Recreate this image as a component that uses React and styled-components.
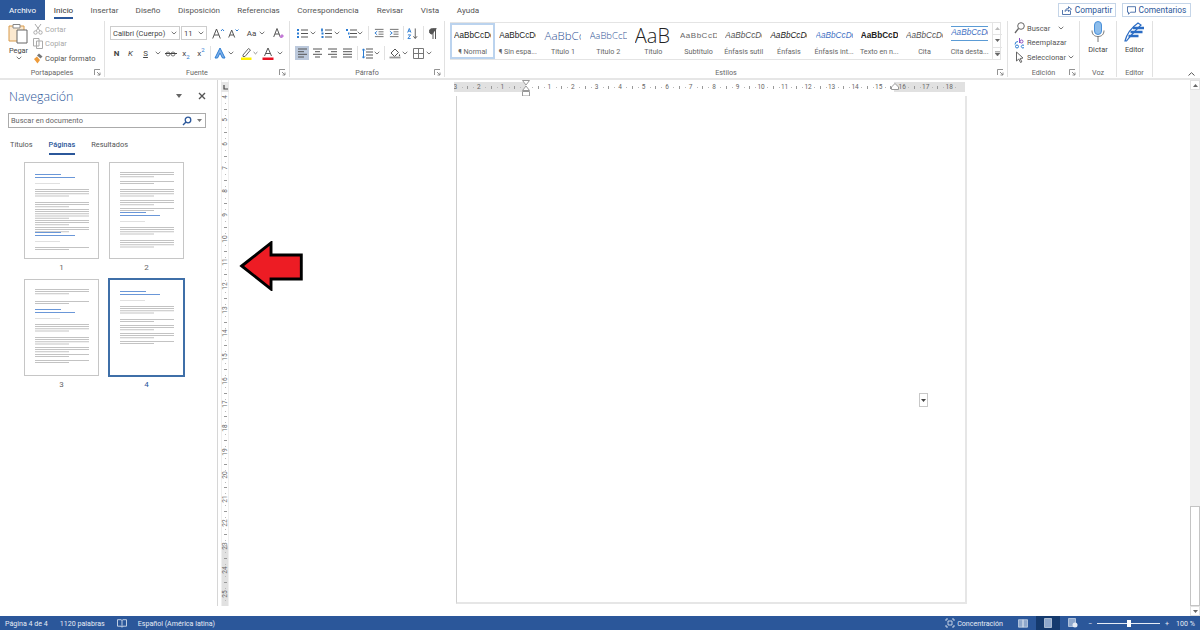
import styled, { createGlobalStyle } from 'styled-components'

const GlobalStyle = createGlobalStyle`
  html, body {
    margin: 0;
    padding: 0;
    background: #FFFFFF;
    overflow: hidden;
  }
  * {
    box-sizing: border-box;
  }
`

const Window = styled.div`
  width: 1200px;
  height: 630px;
  display: flex;
  flex-direction: column;
  font-family: 'Roboto', 'Open Sans', sans-serif;
  font-size: 8px;
  color: #555555;
  background: #FFFFFF;
  overflow: hidden;
`

const TabBar = styled.div`
  height: 20px;
  flex: none;
  display: flex;
  align-items: center;
  font-size: 8.1px;
`

const FileTab = styled.div`
  width: 45px;
  height: 20px;
  margin-right: -9px;
  background: #2B579A;
  color: #FFFFFF;
  display: flex;
  align-items: center;
  justify-content: center;
`

const Tab = styled.div`
  position: relative;
  width: ${props => props.$w}px;
  margin-left: 18px;
  height: 20px;
  line-height: 20px;
  white-space: nowrap;
  display: flex;
  justify-content: center;
  color: ${props => props.$active ? '#333333' : '#555555'};

  &::after {
    content: '';
    display: ${props => props.$active ? 'block' : 'none'};
    position: absolute;
    left: 0;
    right: 0;
    bottom: 1px;
    height: 2px;
    background: #2B579A;
  }
`

const ShareButton = styled.div`
  width: ${props => props.$w}px;
  height: 14px;
  margin-left: ${props => props.$ml}px;
  flex: none;
  border: 1px solid #C5D5E8;
  color: #2B579A;
  font-size: 8.4px;
  display: flex;
  align-items: center;
  justify-content: center;
  gap: 3px;
`

const Ribbon = styled.div`
  position: relative;
  height: 58px;
  flex: none;
  display: flex;
`

const Group = styled.div`
  position: relative;
  width: ${props => props.$w}px;
  height: 56px;
  margin-top: 1px;
  border-right: 1px solid #E1E1E1;
  flex: none;
`

const GroupBody = styled.div`
  height: 48px;
  margin-top: -1px;
  padding-left: ${props => props.$pl || 0}px;
  padding-top: ${props => props.$pt || 0}px;
  display: flex;
  flex-direction: ${props => props.$column ? 'column' : 'row'};
  gap: ${props => props.$gap || 0}px;
  align-items: ${props => props.$center ? 'center' : 'stretch'};
`

const GroupLabel = styled.div`
  height: 10px;
  line-height: 10px;
  text-align: center;
  font-size: 7.2px;
  color: #666666;
`

const Launcher = styled.svg`
  position: absolute;
  right: 3px;
  bottom: 1px;
`

const Collapse = styled.svg`
  position: absolute;
  right: 5px;
  bottom: 2px;
`

const PasteColumn = styled.div`
  width: 33px;
  flex: none;
  padding: 3px 0 0 4px;
  display: flex;
  flex-direction: column;
  align-items: center;
`

const BigLabel = styled.div`
  margin-top: ${props => props.$mt ?? 1}px;
  line-height: 11px;
  font-size: 7.4px;
  color: #444444;
`

const ActionColumn = styled.div`
  padding-top: ${props => props.$pt || 0}px;
  padding-left: ${props => props.$pl || 0}px;
  display: flex;
  flex-direction: column;
`

const ActionRow = styled.div`
  height: 14.5px;
  display: flex;
  align-items: center;
  gap: 2px;
  font-size: 7.5px;
  white-space: nowrap;
  color: ${props => props.$off ? '#A8A8A8' : '#555555'};
`

const RowChevron = styled.span`
  display: flex;
  margin-left: ${props => props.$ml || 0}px;
`

const ToolRow = styled.div`
  height: 16px;
  display: flex;
  align-items: center;
`

const Slot = styled.div`
  width: ${props => props.$w}px;
  margin-left: ${props => props.$ml || 0}px;
  height: 14px;
  flex: none;
  display: flex;
  align-items: center;
  justify-content: center;
  background: ${props => props.$active ? '#BCC9DC' : 'transparent'};
  color: #444444;
  font-weight: ${props => props.$bold ? 700 : 400};
  font-style: ${props => props.$italic ? 'italic' : 'normal'};
`

const ScriptDigit = styled.span`
  font-size: 6px;
  color: #2B7CD3;
  line-height: 0;
  vertical-align: ${props => props.$up ? 'super' : 'sub'};
`

const Divider = styled.div`
  width: 1px;
  height: 14px;
  margin-left: ${props => props.$ml || 0}px;
  flex: none;
  background: #E1E1E1;
`

const Combo = styled.div`
  width: ${props => props.$w}px;
  height: 14px;
  margin-right: 1px;
  flex: none;
  border: 1px solid #CDCDCD;
  padding: 0 2px;
  display: flex;
  align-items: center;
  justify-content: space-between;
  font-size: 7.5px;
  color: #444444;
  white-space: nowrap;
`

const Gallery = styled.div`
  width: 551px;
  height: 38px;
  margin: 2px 0 0 5px;
  border: 1px solid #E4E4E4;
  border-left: 0;
  display: flex;
`

const StyleItem = styled.div`
  width: 45.2px;
  height: 36px;
  flex: none;
  display: flex;
  flex-direction: column;
  align-items: center;
  border: 2px solid ${props => props.$selected ? '#BBD3EE' : 'transparent'};
  overflow: hidden;
`

const StylePreview = styled.div`
  width: 37px;
  flex: none;
  overflow: hidden;
  display: flex;
  align-items: center;
  white-space: nowrap;
  line-height: 1;
  font-family: ${props => props.$light ? "'Open Sans', sans-serif" : "'Liberation Sans', sans-serif"};
  font-size: ${props => props.$size || 8.2}px;
  font-style: ${props => props.$italic ? 'italic' : 'normal'};
  font-weight: ${props => props.$light ? 300 : props.$bold ? 700 : 400};
  letter-spacing: ${props => props.$spacing || 0}px;
  color: ${props => props.$color || '#222222'};
  border-top: ${props => props.$rule ? '1px solid #5B9BD5' : '0'};
  border-bottom: ${props => props.$rule ? '1px solid #5B9BD5' : '0'};
  margin-top: ${props => props.$rule ? '1px' : '0'};
  height: ${props => props.$rule ? '15px' : '22px'};
  margin-bottom: ${props => props.$rule ? '6px' : '0'};
`

const StyleCaption = styled.div`
  margin-top: -1px;
  line-height: 11px;
  font-size: 7.2px;
  white-space: nowrap;
  color: #666666;
`

const GalleryScroll = styled.div`
  width: 10px;
  flex: none;
  display: flex;
  flex-direction: column;
  border-left: 1px solid #E4E4E4;
`

const GalleryStep = styled.div`
  flex: 1;
  display: flex;
  align-items: center;
  justify-content: center;
  border-bottom: ${props => props.$last ? '0' : '1px solid #E4E4E4'};
`

const Workspace = styled.div`
  flex: 1;
  min-height: 0;
  display: flex;
  background: #FFFFFF;
  border-top: 2px solid #E6E6E6;
`

const NavPanel = styled.div`
  width: 218px;
  height: 526px;
  flex: none;
  padding: 6px 12px 0 8px;
  border-right: 1px solid #D6D6D6;
  font-size: 7.4px;
`

const NavHeader = styled.div`
  height: 20px;
  display: flex;
  align-items: center;
  padding-left: 1px;
`

const NavTitle = styled.div`
  flex: 1;
  font-family: 'Open Sans', sans-serif;
  font-weight: 300;
  font-size: 12.4px;
  color: #2B579A;
`

const NavClose = styled.svg`
  margin-left: 16px;
  margin-right: -1px;
`

const SearchBox = styled.div`
  width: 198px;
  height: 15px;
  margin-top: 7px;
  border: 1px solid #ABABAB;
  display: flex;
  align-items: center;
  gap: 5px;
  padding: 0 3px 0 2px;
  color: #666666;
`

const SearchText = styled.div`
  flex: 1;
`

const NavTabs = styled.div`
  display: flex;
  gap: 16px;
  margin-top: 10px;
  padding-left: 2px;
  height: 17px;
`

const NavTab = styled.div`
  height: 17px;
  line-height: 14px;
  color: ${props => props.$active ? '#2B579A' : '#555555'};
  font-weight: ${props => props.$active ? 500 : 400};
  white-space: nowrap;
  border-bottom: 2px solid ${props => props.$active ? '#2B579A' : 'transparent'};
`

const ThumbGrid = styled.div`
  display: grid;
  grid-template-columns: 75px 75px;
  column-gap: 10px;
  row-gap: 6px;
  margin: 7px 0 0 16px;
`

const ThumbCell = styled.div`
  display: flex;
  flex-direction: column;
  align-items: center;
`

const Thumb = styled.svg`
  display: block;
  width: 75px;
  height: 97px;
  background: #FFFFFF;
  outline: ${props => props.$selected ? '2px solid #3F6FA8' : '1px solid #C6C6C6'};
  outline-offset: -1px;
`

const ThumbLabel = styled.div`
  margin-top: 3px;
  line-height: 11px;
  font-size: 8px;
  color: ${props => props.$selected ? '#2B579A' : '#666666'};
`

const SideRuler = styled.div`
  position: relative;
  width: 8px;
  height: 526px;
  margin-left: 3px;
  flex: none;
  overflow: hidden;
  background: linear-gradient(#FFFFFF 0 465px, #E1E1E1 465px);
  box-shadow: inset 1px 0 0 #EFEFEF, inset -1px 0 0 #EFEFEF;
`

const SideTrack = styled.div`
  margin-top: 5px;
  display: flex;
  flex-direction: column;
`

const SideCell = styled.div`
  height: 23.67px;
  flex: none;
  display: flex;
  align-items: center;
  justify-content: center;
  font-size: 6.5px;
  color: #666666;
  background:
    linear-gradient(#999999, #999999) 50% 0 / 3px 1px no-repeat,
    linear-gradient(#BBBBBB, #BBBBBB) 50% 6px / 1px 1px no-repeat,
    linear-gradient(#BBBBBB, #BBBBBB) 50% 18px / 1px 1px no-repeat;
`

const SideNumber = styled.span`
  display: block;
  transform: rotate(-90deg);
`

const RulerCorner = styled.div`
  position: absolute;
  top: 2px;
  left: 0;
  width: 8px;
  height: 10px;
  background: #E6E6E6;
  display: flex;
  align-items: center;
  justify-content: center;
`

const DocArea = styled.div`
  position: relative;
  flex: 1;
  min-width: 0;
  padding: 2px 0 0 225px;
`

const TopRuler = styled.div`
  width: 511px;
  height: 10px;
  overflow: hidden;
  background: linear-gradient(90deg, #E1E1E1 0 72px, #FFFFFF 72px 440px, #E1E1E1 440px);
`

const TopTrack = styled.div`
  display: flex;
  margin-left: -10.4px;
`

const TopCell = styled.div`
  width: 23.53px;
  height: 10px;
  flex: none;
  font-size: 6.5px;
  line-height: 10px;
  text-align: center;
  color: #666666;
  background:
    linear-gradient(#999999, #999999) 0 50% / 1px 3px no-repeat,
    linear-gradient(#BBBBBB, #BBBBBB) 6px 50% / 1px 1px no-repeat,
    linear-gradient(#BBBBBB, #BBBBBB) 18px 50% / 1px 1px no-repeat;
`

const IndentMarker = styled.svg`
  position: absolute;
  top: 0;
  left: 293px;
`

const MarginMarker = styled.svg`
  position: absolute;
  top: 3px;
  left: 662px;
`

const Page = styled.div`
  position: relative;
  width: 511px;
  height: 508px;
  margin: 4px 0 0 2px;
  border-left: 1px solid #CFCFCF;
  border-right: 2px solid #E6E6E6;
  border-bottom: 2px solid #E6E6E6;
  background: #FFFFFF;
`

const PageHandle = styled.div`
  position: absolute;
  top: 297px;
  right: 37px;
  width: 9px;
  height: 14px;
  border: 1px solid #C8C8C8;
  background: #FFFFFF;
  display: flex;
  align-items: center;
  justify-content: center;
`

const PointerArrow = styled.svg`
  position: absolute;
  top: 161px;
  left: 10px;
`

const ScrollBar = styled.div`
  width: 10px;
  flex: none;
  display: flex;
  flex-direction: column;
  background: #F1F1F1;
`

const ScrollStep = styled.div`
  height: 10px;
  flex: none;
  display: flex;
  align-items: center;
  justify-content: center;
  background: #FFFFFF;
  border: 1px solid #E1E1E1;
`

const ScrollSpace = styled.div`
  flex: 1;
`

const ScrollThumb = styled.div`
  height: 100px;
  flex: none;
  background: #FFFFFF;
  border: 1px solid #C4C4C4;
`

const StatusBar = styled.div`
  height: 14px;
  flex: none;
  display: flex;
  align-items: center;
  background: #2B579A;
  color: #E6ECF5;
  font-size: 7.1px;
  white-space: nowrap;
`

const StatusItem = styled.div`
  margin-left: ${props => props.$ml || 0}px;
  margin-right: ${props => props.$mr || 0}px;
  display: flex;
  align-items: center;
  flex: none;
  gap: 2px;
`

const StatusSpacer = styled.div`
  flex: 1;
`

const StatusView = styled.div`
  width: ${props => props.$w}px;
  margin-left: ${props => props.$ml || 0}px;
  height: 14px;
  flex: none;
  display: flex;
  align-items: center;
  justify-content: center;
  background: ${props => props.$active ? '#153A6E' : 'transparent'};
`

const ZoomTrack = styled.div`
  position: relative;
  width: 63px;
  height: 1px;
  margin: 0 3px;
  background: #E6ECF5;
`

const ZoomKnob = styled.div`
  position: absolute;
  left: 30px;
  top: -3px;
  width: 4px;
  height: 7px;
  background: #FFFFFF;
`

const chevron = <svg width="6" height="4" viewBox="0 0 6 4"><path d="M.7.8 3 3 5.3.8" fill="none" stroke="#666" strokeWidth=".9" /></svg>
const launcher = (
  <Launcher width="7" height="7" viewBox="0 0 7 7">
    <path d="M.5 6V.5H6M3 3l3 3M6 3.5V6H3.5" fill="none" stroke="#777" strokeWidth=".8" />
  </Launcher>
)

const ListIcon = ({ marks }) => (
  <svg width="11" height="11" viewBox="0 0 11 11">
    <path d="M4 2h7M4 5.5h7M4 9h7" stroke="#555" strokeWidth="1" />
    <path d={marks} stroke="#2B7CD3" strokeWidth="1.8" />
  </svg>
)

const AlignIcon = ({ d }) => (
  <svg width="11" height="10" viewBox="0 0 11 10">
    <path d={d} stroke="#555" strokeWidth="1" fill="none" />
  </svg>
)

const IndentIcon = ({ d }) => (
  <svg width="11" height="10" viewBox="0 0 11 10">
    <path d="M1 1h9.5M5 3.7h5.5M5 6.3h5.5M1 9h9.5" stroke="#666" strokeWidth="1" />
    <path d={d} stroke="#2B7CD3" strokeWidth="1" fill="none" />
  </svg>
)

const fontRowFirst = (
  <ToolRow>
    <Combo $w={70}>Calibri (Cuerpo){chevron}</Combo>
    <Combo $w={26}>11{chevron}</Combo>
    <Slot $w={14} $ml={3}>
      <svg width="13" height="11" viewBox="0 0 13 11"><path d="M.7 10.5 4.5 1 8.3 10.5M2.2 7h4.6" fill="none" stroke="#555" /><path d="M9 3l1.5-1.7L12 3" fill="none" stroke="#2B7CD3" /></svg>
    </Slot>
    <Slot $w={12} $ml={2}>
      <svg width="11" height="10" viewBox="0 0 11 10"><path d="M.7 9.5 3.7 2 6.7 9.5M1.8 7h3.8" fill="none" stroke="#555" /><path d="M7.5 1.5 9 3l1.5-1.5" fill="none" stroke="#2B7CD3" /></svg>
    </Slot>
    <Slot $w={13} $ml={6}>Aa</Slot>
    <Slot $w={7}>{chevron}</Slot>
    <Slot $w={12} $ml={8}>
      <svg width="12" height="12" viewBox="0 0 12 12"><path d="M.7 10 4 1.5 7.3 10M2 7h4" fill="none" stroke="#555" /><path d="M6.5 9.5 9 7l2 2-2 2H7.5z" fill="#C37BD6" /></svg>
    </Slot>
  </ToolRow>
)

const fontRowSecond = (
  <ToolRow>
    <Slot $w={13} $bold>N</Slot>
    <Slot $w={15} $italic>K</Slot>
    <Slot $w={15}><u>S</u></Slot>
    <Slot $w={10}>{chevron}</Slot>
    <Slot $w={16}>
      <svg width="12" height="9" viewBox="0 0 12 9"><circle cx="3" cy="5" r="2" fill="none" stroke="#777" /><circle cx="8" cy="5" r="2" fill="none" stroke="#777" /><path d="M0 4.5h12" stroke="#444" /></svg>
    </Slot>
    <Slot $w={14}><span>x<ScriptDigit>2</ScriptDigit></span></Slot>
    <Slot $w={16}><span>x<ScriptDigit $up>2</ScriptDigit></span></Slot>
    <Divider $ml={1} />
    <Slot $w={16} $ml={1}>
      <svg width="12" height="12" viewBox="0 0 12 12"><path d="M1 11 6 1l5 10H8.5L6 6 3.5 11z" fill="#7FB0E8" stroke="#2B7CD3" /></svg>
    </Slot>
    <Slot $w={6}>{chevron}</Slot>
    <Slot $w={15} $ml={4}>
      <svg width="12" height="13" viewBox="0 0 12 13"><path d="M3 8 8.5 1.5 10.5 3 5 9.5H3z" fill="none" stroke="#666" /><path d="M1 10.5h10.5V13H1z" fill="#FFF200" /></svg>
    </Slot>
    <Slot $w={5}>{chevron}</Slot>
    <Slot $w={14} $ml={3}>
      <svg width="12" height="13" viewBox="0 0 12 13"><path d="M2.5 9 6 1l3.5 8M3.7 6.5h4.6" fill="none" stroke="#555" /><path d="M.5 10.5h11V13H.5z" fill="#E81123" /></svg>
    </Slot>
    <Slot $w={9}>{chevron}</Slot>
  </ToolRow>
)

const paragraphRowFirst = (
  <ToolRow>
    <Slot $w={14}><ListIcon marks="M0 2h2M0 5.5h2M0 9h2" /></Slot>
    <Slot $w={8}>{chevron}</Slot>
    <Slot $w={13} $ml={3}><ListIcon marks="M1 .5v3M.5 5.5h2M.5 9h2" /></Slot>
    <Slot $w={8}>{chevron}</Slot>
    <Slot $w={12} $ml={4}><ListIcon marks="M0 2h2M2 5.5h1.5M3 9h1" /></Slot>
    <Slot $w={6}>{chevron}</Slot>
    <Divider $ml={5} />
    <Slot $w={10} $ml={5}><IndentIcon d="M3.5 3 1 5l2.5 2" /></Slot>
    <Slot $w={10} $ml={5}><IndentIcon d="M1 3l2.5 2L1 7" /></Slot>
    <Divider $ml={4} />
    <Slot $w={11} $ml={3}>
      <svg width="12" height="13" viewBox="0 0 12 13"><path d="M.7 5.5 2.5 1 4.3 5.5M1.3 4h2.4M1 8h3L1 12h3" fill="none" stroke="#2B7CD3" /><path d="M9 1v10.5M7 9.5l2 2.5 2-2.5" fill="none" stroke="#555" /></svg>
    </Slot>
    <Divider $ml={5} />
    <Slot $w={10} $ml={4}>
      <svg width="8" height="11" viewBox="0 0 8 11"><path d="M3.5 6A2.7 2.7 0 1 1 3.5.7H7.5M4 .7V11M6.5.7V11" fill="#555" stroke="#555" /></svg>
    </Slot>
  </ToolRow>
)

const paragraphRowSecond = (
  <ToolRow>
    <Slot $w={14} $active><AlignIcon d="M1 1h9M1 3.7h6M1 6.3h9M1 9h6" /></Slot>
    <Slot $w={12} $ml={2}><AlignIcon d="M1 1h9M3 3.7h5M1 6.3h9M3 9h5" /></Slot>
    <Slot $w={12} $ml={3}><AlignIcon d="M1 1h9M4 3.7h6M1 6.3h9M4 9h6" /></Slot>
    <Slot $w={14} $ml={2}><AlignIcon d="M1 1h9M1 3.7h9M1 6.3h9M1 9h9" /></Slot>
    <Divider $ml={3} />
    <Slot $w={12} $ml={3}>
      <svg width="11" height="11" viewBox="0 0 11 11"><path d="M4 1h7M4 4h7M4 7h7M4 10h7" stroke="#555" /><path d="M1.5 1v9M.2 2.5l1.3-1.7 1.3 1.7M.2 8.5l1.3 1.7 1.3-1.7" fill="none" stroke="#2B7CD3" /></svg>
    </Slot>
    <Slot $w={8}>{chevron}</Slot>
    <Divider $ml={3} />
    <Slot $w={12} $ml={4}>
      <svg width="12" height="13" viewBox="0 0 12 13"><path d="M2 6 6 2l3.5 3.5-4 4z" fill="none" stroke="#555" /><path d="M10.5 7c.8 1 .8 2 0 2.3-.8-.3-.8-1.3 0-2.3z" fill="#555" /><path d="M.5 10.5h11" stroke="#999" strokeWidth="1.8" /></svg>
    </Slot>
    <Slot $w={8}>{chevron}</Slot>
    <Slot $w={12} $ml={3}>
      <svg width="11" height="11" viewBox="0 0 11 11"><path d="M.5.5h10v10H.5zM5.5.5v10M.5 5.5h10" fill="none" stroke="#777" /></svg>
    </Slot>
    <Slot $w={10}>{chevron}</Slot>
  </ToolRow>
)

const styleItems = [
  { name: '¶ Normal', selected: true },
  { name: '¶ Sin espa...' },
  { name: 'Título 1', size: 11.5, color: '#2F5496', light: true },
  { name: 'Título 2', size: 9.5, color: '#2F5496', light: true },
  { name: 'Título', size: 20, text: 'AaB', color: '#222222', light: true },
  { name: 'Subtítulo', size: 8, color: '#666666', spacing: 0.5 },
  { name: 'Énfasis sutil', color: '#555555', italic: true },
  { name: 'Énfasis', italic: true },
  { name: 'Énfasis int...', color: '#4472C4', italic: true },
  { name: 'Texto en n...', bold: true },
  { name: 'Cita', color: '#555555', italic: true },
  { name: 'Cita desta...', color: '#4472C4', italic: true, rule: true }
]

// Blocks of [y, number of lines] for the page thumbnails, blue headings are marked
const thumbPages = [
  [['head', 12], ['note', 21], [27, 4], [40, 3], [47, 5], [58, 3], [65, 3], ['head', 70], ['note', 79], [85, 2]],
  [[10, 3], [19, 2], [27, 4], [38, 3], [46, 2], ['head', 50], ['note', 59], [65, 4], [78, 4]],
  [[10, 3], [22, 2], ['head', 30], ['note', 39], [45, 4], [58, 4], [68, 3], [75, 2], [81, 2]],
  [['head', 12], ['note', 21], [27, 4], [40, 2], [46, 3], [54, 3], [62, 2]]
]

const ThumbLines = ({ blocks }) => blocks.flatMap(([kind, value], blockIndex) => {
  if (kind === 'head') {
    return [
      <rect key={`${blockIndex}a`} x="11" y={value} width="26" height="1" fill="#6A97D8" />,
      <rect key={`${blockIndex}b`} x="11" y={value + 3} width="40" height="1" fill="#6A97D8" />
    ]
  }
  if (kind === 'note') {
    return [<rect key={blockIndex} x="11" y={value} width="25" height=".6" fill="#CCCCCC" />]
  }
  return Array.from({ length: value }, (_, line) => (
    <rect
      key={`${blockIndex}-${line}`}
      x="11"
      y={kind + line * 2.2}
      width={line === value - 1 ? 34 : 54}
      height=".8"
      fill="#B4B4B4"
    />
  ))
})

const sideNumbers = Array.from({ length: 22 }, (_, i) => i + 4)
const topNumbers = [3, 2, 1, '', ...Array.from({ length: 18 }, (_, i) => i + 1)]

const App = () => (
  <Window>
    <GlobalStyle />
    <TabBar>
      <FileTab>Archivo</FileTab>
      <Tab $w={19} $active>Inicio</Tab>
      <Tab $w={27}>Insertar</Tab>
      <Tab $w={24}>Diseño</Tab>
      <Tab $w={42}>Disposición</Tab>
      <Tab $w={41}>Referencias</Tab>
      <Tab $w={62}>Correspondencia</Tab>
      <Tab $w={26}>Revisar</Tab>
      <Tab $w={18}>Vista</Tab>
      <Tab $w={22}>Ayuda</Tab>
      <ShareButton $w={58} $ml={579}>
        <svg width="10" height="9" viewBox="0 0 10 9"><path d="M.5 4v4.5h8V5M3 5.5C3 3.5 4.5 2.5 6.5 2.5V.7L9.5 3.2 6.5 5.5V4C5 4 3.8 4.5 3 5.5z" fill="none" stroke="#2B579A" strokeWidth=".8" /></svg>
        Compartir
      </ShareButton>
      <ShareButton $w={69} $ml={6}>
        <svg width="9" height="9" viewBox="0 0 9 9"><path d="M.5.7h8v5.5H3.5L1.5 8.3V6.2h-1z" fill="none" stroke="#2B579A" strokeWidth=".8" /></svg>
        Comentarios
      </ShareButton>
    </TabBar>
    <Ribbon>
      <Group $w={105}>
        <GroupBody>
          <PasteColumn>
            <svg width="22" height="21" viewBox="0 0 22 21">
              <path d="M1 3h15v15H1z" fill="#FBE9D0" stroke="#D89A4A" />
              <path d="M5 1.5h7V5H5z" fill="#FFFFFF" stroke="#888888" />
              <path d="M9 7h10v13H9z" fill="#FFFFFF" stroke="#666666" />
            </svg>
            <BigLabel>Pegar</BigLabel>
            {chevron}
          </PasteColumn>
          <ActionColumn $pt={2}>
            <ActionRow $off>
              <svg width="10" height="12" viewBox="0 0 10 12"><path d="M2 1l5 7M8 1 3 8" stroke="#AAA" fill="none" /><circle cx="2.5" cy="9.5" r="1.7" fill="none" stroke="#AAA" /><circle cx="7.5" cy="9.5" r="1.7" fill="none" stroke="#AAA" /></svg>
              Cortar
            </ActionRow>
            <ActionRow $off>
              <svg width="10" height="11" viewBox="0 0 10 11"><path d="M.5.5H6V8H.5zM3.5 3h6v7.5h-6z" fill="#FFF" stroke="#AAA" /></svg>
              Copiar
            </ActionRow>
            <ActionRow>
              <svg width="10" height="11" viewBox="0 0 10 11"><path d="M6 .5l3.5 3-2 2L4 2.5z" fill="#777" /><path d="M1 6l3-2.5L7 7l-2.5 3.5z" fill="#EE9B3A" /></svg>
              Copiar formato
            </ActionRow>
          </ActionColumn>
        </GroupBody>
        <GroupLabel>Portapapeles</GroupLabel>
        {launcher}
      </Group>
      <Group $w={185}>
        <GroupBody $pl={5} $pt={5} $column $gap={4}>
          {fontRowFirst}
          {fontRowSecond}
        </GroupBody>
        <GroupLabel>Fuente</GroupLabel>
        {launcher}
      </Group>
      <Group $w={155}>
        <GroupBody $pl={5} $pt={5} $column $gap={4}>
          {paragraphRowFirst}
          {paragraphRowSecond}
        </GroupBody>
        <GroupLabel>Párrafo</GroupLabel>
        {launcher}
      </Group>
      <Group $w={563}>
        <GroupBody>
          <Gallery>
            {styleItems.map(item => (
              <StyleItem key={item.name} $selected={item.selected}>
                <StylePreview
                  $size={item.size}
                  $color={item.color}
                  $italic={item.italic}
                  $bold={item.bold}
                  $light={item.light}
                  $spacing={item.spacing}
                  $rule={item.rule}
                >
                  {item.text || 'AaBbCcDc'}
                </StylePreview>
                <StyleCaption>{item.name}</StyleCaption>
              </StyleItem>
            ))}
            <GalleryScroll>
              <GalleryStep><svg width="5" height="3" viewBox="0 0 5 3"><path d="M2.5 0 5 3H0z" fill="#BBB" /></svg></GalleryStep>
              <GalleryStep><svg width="5" height="3" viewBox="0 0 5 3"><path d="M0 0h5L2.5 3z" fill="#666" /></svg></GalleryStep>
              <GalleryStep $last><svg width="5" height="5" viewBox="0 0 5 5"><path d="M0 .5h5M0 2h5L2.5 5z" fill="#666" stroke="#666" strokeWidth=".5" /></svg></GalleryStep>
            </GalleryScroll>
          </Gallery>
        </GroupBody>
        <GroupLabel>Estilos</GroupLabel>
        {launcher}
      </Group>
      <Group $w={72}>
        <GroupBody $pl={6} $pt={1} $column>
          <ActionRow>
            <svg width="11" height="12" viewBox="0 0 11 12"><circle cx="7" cy="4" r="3.3" fill="none" stroke="#666" /><path d="M4.5 6.5 1 11" stroke="#666" strokeWidth="1.3" /></svg>
            Buscar
            <RowChevron $ml={6}>{chevron}</RowChevron>
          </ActionRow>
          <ActionRow>
            <svg width="11" height="12" viewBox="0 0 11 12"><path d="M1 7.5a3 3 0 0 1 3-3" fill="none" stroke="#2B7CD3" /><path d="M5.5 1v5" stroke="#8B4FC0" /><circle cx="7.5" cy="4.5" r="1.5" fill="none" stroke="#8B4FC0" /><circle cx="3" cy="9.5" r="1.5" fill="none" stroke="#2B7CD3" /><path d="M10 8.5a1.5 1.5 0 1 0 0 2" fill="none" stroke="#2B7CD3" /></svg>
            Reemplazar
          </ActionRow>
          <ActionRow>
            <svg width="11" height="12" viewBox="0 0 11 12"><path d="M2.5 1v9l2.3-2 1.7 3.5 1.3-.6L6.2 7.5 9 7z" fill="none" stroke="#666" /></svg>
            Seleccionar
            <RowChevron>{chevron}</RowChevron>
          </ActionRow>
        </GroupBody>
        <GroupLabel>Edición</GroupLabel>
        {launcher}
      </Group>
      <Group $w={37}>
        <GroupBody $pt={1} $column $center>
          <svg width="14" height="21" viewBox="0 0 14 21"><rect x="3.5" y=".5" width="7" height="13" rx="3.5" fill="#8DBDEB" stroke="#4A90D9" /><path d="M1 9.5c0 4 2.5 6 6 6s6-2 6-6M7 15.5V21" fill="none" stroke="#777" /></svg>
          <BigLabel $mt={2}>Dictar</BigLabel>
        </GroupBody>
        <GroupLabel>Voz</GroupLabel>
      </Group>
      <Group $w={36}>
        <GroupBody $pt={1} $column $center>
          <svg width="21" height="21" viewBox="0 0 21 21"><path d="M1 20c2-8 6-13 13-18l3 2C12 9 7 14 2.5 20z" fill="none" stroke="#2B6CC4" strokeWidth="1.2" /><path d="M9 7h11M6.5 11h12M4.5 15h10" stroke="#2B6CC4" strokeWidth="2.4" /></svg>
          <BigLabel $mt={2}>Editor</BigLabel>
        </GroupBody>
        <GroupLabel>Editor</GroupLabel>
      </Group>
      <Collapse width="7" height="4" viewBox="0 0 7 4">
        <path d="M.5 3.5 3.5.7 6.5 3.5" fill="none" stroke="#555" />
      </Collapse>
    </Ribbon>
    <Workspace>
      <NavPanel>
        <NavHeader>
          <NavTitle>Navegación</NavTitle>
          <svg width="6" height="4" viewBox="0 0 6 4"><path d="M0 0h6L3 4z" fill="#666" /></svg>
          <NavClose width="8" height="8" viewBox="0 0 8 8"><path d="M1 1l6 6M7 1 1 7" stroke="#555" strokeWidth="1.4" /></NavClose>
        </NavHeader>
        <SearchBox>
          <SearchText>Buscar en documento</SearchText>
          <svg width="10" height="10" viewBox="0 0 10 10"><circle cx="6" cy="4" r="2.8" fill="none" stroke="#2B579A" strokeWidth="1.3" /><path d="M4 6 1 9" stroke="#2B579A" strokeWidth="1.5" /></svg>
          <svg width="5" height="3" viewBox="0 0 5 3"><path d="M0 0h5L2.5 3z" fill="#777" /></svg>
        </SearchBox>
        <NavTabs>
          <NavTab>Títulos</NavTab>
          <NavTab $active>Páginas</NavTab>
          <NavTab>Resultados</NavTab>
        </NavTabs>
        <ThumbGrid>
          {thumbPages.map((blocks, index) => (
            <ThumbCell key={index}>
              <Thumb viewBox="0 0 75 97" $selected={index === 3}>
                <ThumbLines blocks={blocks} />
              </Thumb>
              <ThumbLabel $selected={index === 3}>{index + 1}</ThumbLabel>
            </ThumbCell>
          ))}
        </ThumbGrid>
      </NavPanel>
      <SideRuler>
        <SideTrack>
          {sideNumbers.map(number => (
            <SideCell key={number}><SideNumber>{number}</SideNumber></SideCell>
          ))}
        </SideTrack>
        <RulerCorner>
          <svg width="5" height="5" viewBox="0 0 5 5"><path d="M1 0v4h4" fill="none" stroke="#444" strokeWidth="1.2" /></svg>
        </RulerCorner>
      </SideRuler>
      <DocArea>
        <TopRuler>
          <TopTrack>
            {topNumbers.map((number, index) => (
              <TopCell key={index}>{number}</TopCell>
            ))}
          </TopTrack>
        </TopRuler>
        <IndentMarker width="8" height="17" viewBox="0 0 8 17">
          <path d="M.5.5h7L4 5zM4 6l3.5 4.5H.5zM.5 11.5h7V16h-7z" fill="#FFF" stroke="#999" />
        </IndentMarker>
        <MarginMarker width="8" height="7" viewBox="0 0 8 7">
          <path d="M4 .5 7.5 4v2.5h-7V4z" fill="#FFF" stroke="#999" />
        </MarginMarker>
        <Page>
          <PageHandle>
            <svg width="5" height="3" viewBox="0 0 5 3"><path d="M0 0h5L2.5 3z" fill="#444" /></svg>
          </PageHandle>
        </Page>
        <PointerArrow width="65" height="50" viewBox="0 0 66 52">
          <path d="M2 26 32.5 2v12.5H64v25H32.5V50z" fill="#ED1C24" stroke="#000" strokeWidth="3" />
        </PointerArrow>
      </DocArea>
      <ScrollBar>
        <ScrollStep>
          <svg width="5" height="3" viewBox="0 0 5 3"><path d="M2.5 0 5 3H0z" fill="#666" /></svg>
        </ScrollStep>
        <ScrollSpace />
        <ScrollThumb />
        <ScrollStep>
          <svg width="5" height="3" viewBox="0 0 5 3"><path d="M0 0h5L2.5 3z" fill="#666" /></svg>
        </ScrollStep>
      </ScrollBar>
    </Workspace>
    <StatusBar>
      <StatusItem $ml={5}>Página 4 de 4</StatusItem>
      <StatusItem $ml={12}>1120 palabras</StatusItem>
      <StatusItem $ml={12}>
        <svg width="10" height="9" viewBox="0 0 10 9"><path d="M.5.7H4L5 1.5 6 .7h3.5v6.5H6L5 8.3 4 7.2H.5zM5 1.5V8" fill="none" stroke="#E6ECF5" strokeWidth=".8" /></svg>
      </StatusItem>
      <StatusItem $ml={11}>Español (América latina)</StatusItem>
      <StatusSpacer />
      <StatusItem>
        <svg width="10" height="10" viewBox="0 0 10 10"><path d="M1 3V1h2M7 1h2v2M9 7v2H7M3 9H1V7" fill="none" stroke="#E6ECF5" strokeWidth=".8" /><path d="M3 3h4v4H3z" fill="none" stroke="#E6ECF5" strokeWidth=".8" /></svg>
        Concentración
      </StatusItem>
      <StatusView $w={10} $ml={15}>
        <svg width="10" height="9" viewBox="0 0 10 9"><path d="M.5.7H5v7.5H.5zM5 .7h4.5v7.5H5z" fill="#8FA8CC" stroke="#E6ECF5" strokeWidth=".6" /></svg>
      </StatusView>
      <StatusView $w={24} $ml={8} $active>
        <svg width="8" height="10" viewBox="0 0 8 10"><path d="M.5.5h7v9h-7z" fill="#8FA8CC" stroke="#E6ECF5" strokeWidth=".6" /></svg>
      </StatusView>
      <StatusView $w={10} $ml={8}>
        <svg width="10" height="10" viewBox="0 0 10 10"><path d="M.5.5h7v8h-7z" fill="#8FA8CC" stroke="#E6ECF5" strokeWidth=".6" /><circle cx="7" cy="7" r="2.5" fill="#E6ECF5" /></svg>
      </StatusView>
      <StatusItem $ml={10}>
        −
        <ZoomTrack><ZoomKnob /></ZoomTrack>
        +
      </StatusItem>
      <StatusItem $ml={7} $mr={5}>100 %</StatusItem>
    </StatusBar>
  </Window>
)

export default App
